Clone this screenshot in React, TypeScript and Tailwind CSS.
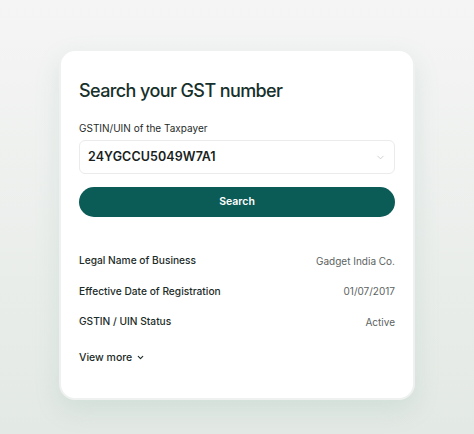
import { ChevronDown } from 'lucide-react'

const rows = [
  { label: 'Legal Name of Business', value: 'Gadget India Co.' },
  { label: 'Effective Date of Registration', value: '01/07/2017' },
  { label: 'GSTIN / UIN Status', value: 'Active' },
]

const App: React.FC = () => {
  return (
    <div
      className="w-[474px] h-[434px] bg-gradient-to-b from-[#f5f5f5] to-[#e3e9e4] pt-[49px] pl-[59px]"
      style={{ fontFamily: 'Inter, "Noto Sans", sans-serif' }}
    >
      <div className="w-[356px] h-[351px] rounded-[16px] bg-white border-2 border-[#eef1ef] shadow-[0_10px_24px_rgba(120,170,160,0.18)] px-[18px] pt-[28px] text-[#17302b]">
        <h1 className="text-[18px] leading-[24px] font-medium tracking-[-0.6px]">Search your GST number</h1>
        <p className="mt-[18px] text-[10px] leading-[14px] text-[#1f2b29]">GSTIN/UIN of the Taxpayer</p>
        <div className="mt-[5px] h-[34px] rounded-[6px] border border-[#e9ecea] flex items-center justify-between px-[8px]">
          <span className="text-[12.5px] font-semibold tracking-[0.1px] text-[#1a1f1e]">24YGCCU5049W7A1</span>
          <ChevronDown className="w-[11px] h-[11px] text-[#b9bfbd]" strokeWidth={1.5} />
        </div>
        <button className="mt-[13px] w-full h-[30px] rounded-full bg-[#0b5b57] text-white text-[10.5px] font-semibold">
          Search
        </button>
        <div className="mt-[37px] flex flex-col gap-[16.5px]">
          {rows.map((r) => (
            <div key={r.label} className="flex items-center justify-between h-[14px]">
              <span className="text-[10.2px] font-medium text-[#1c2b28]">{r.label}</span>
              <span className="text-[10px] text-[#5b6361]">{r.value}</span>
            </div>
          ))}
        </div>
        <div className="mt-[21px] flex items-center gap-[4px] text-[10.5px] font-medium text-[#1c2b28]">
          View more
          <ChevronDown className="w-[9px] h-[9px]" strokeWidth={3} />
        </div>
      </div>
    </div>
  )
}

export default App
